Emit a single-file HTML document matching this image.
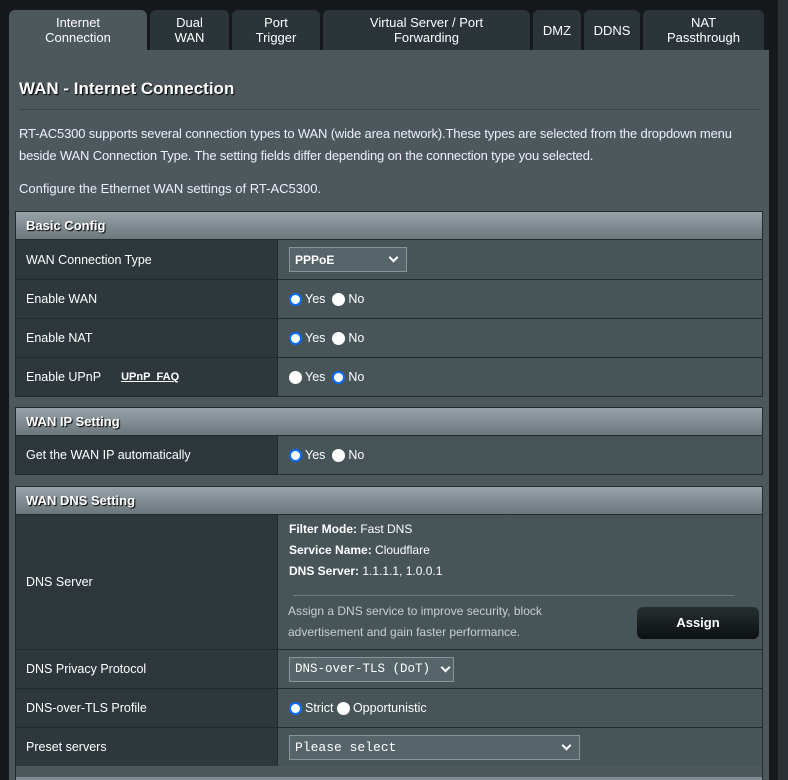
<!DOCTYPE html>
<html><head><style>
*{box-sizing:border-box;margin:0;padding:0}
html,body{width:788px;height:780px;overflow:hidden}
body{background:#15191b;font-family:"Liberation Sans",Arial,sans-serif;color:#fff;position:relative}
.strip{position:absolute;left:778px;top:0;width:10px;height:780px;background:#2b3134}
.tab{position:absolute;top:10px;height:40px;background:#2b3438;border-radius:6px 6px 0 0;text-align:center;font-size:13px;line-height:15px;color:#fff;display:flex;align-items:center;justify-content:center}
.tab.act{background:#4d585d}
.panel{position:absolute;left:9px;top:50px;width:760px;height:730px;background:#4d585d}
h1{position:absolute;left:19px;top:79px;font-size:17px;font-weight:bold;text-shadow:1px 1px 1px #000}
.hr{position:absolute;left:19px;top:109px;width:741px;height:1px;background:#6d797e;border-top:1px solid #3a4448}
.p{position:absolute;left:19px;width:750px;font-size:13px;color:#eef}
.tbl{position:absolute;left:15px;width:748px;border:1px solid #222b2e}
.hd{height:28px;background:linear-gradient(#97a3a8,#6b777c);font-weight:bold;font-size:13px;padding:6px 10px;text-shadow:1px 1px 1px #000;border-bottom:1px solid #222b2e}
.row{display:flex;border-top:1px solid #222b2e;font-size:12.5px}
.hd+.row{border-top:none}
.l{width:262px;background:#2e383c;padding-left:10px;display:flex;align-items:center;border-right:1px solid #222b2e}
.r{flex:1;background:#475458;padding-left:11px;display:flex;align-items:center;white-space:nowrap}
.rad{display:inline-block;width:13px;height:13px;border-radius:50%;background:#fff;vertical-align:-1px;margin-right:3px}
.rad.on{border:2px solid #0a6cff;background:#fff;box-shadow:inset 0 0 0 1px #fff}
.sel{border:1px solid #8a9599;background:#566569;height:25px;font-family:"Liberation Mono",monospace;font-size:13px;padding:0 5px;display:flex;align-items:center;justify-content:space-between;white-space:nowrap}
.chev{width:7px;height:7px;border-right:2px solid #fff;border-bottom:2px solid #fff;transform:rotate(45deg);margin:-4px 4px 0 6px;flex:none}
a{color:#fff;text-decoration:underline}
</style></head><body>
<div class="strip"></div>
<div class="panel"></div>
<div class="tab act" style="left:9px;width:138px">Internet<br>Connection</div>
<div class="tab" style="left:150px;width:79px">Dual<br>WAN</div>
<div class="tab" style="left:232px;width:88px">Port<br>Trigger</div>
<div class="tab" style="left:323px;width:207px">Virtual Server / Port<br>Forwarding</div>
<div class="tab" style="left:533px;width:48px">DMZ</div>
<div class="tab" style="left:584px;width:56px">DDNS</div>
<div class="tab" style="left:643px;width:121px">NAT<br>Passthrough</div>
<h1>WAN - Internet Connection</h1>
<div class="hr"></div>
<div class="p" style="top:123px;line-height:22px;letter-spacing:-0.15px">RT-AC5300 supports several connection types to WAN (wide area network).These types are selected from the dropdown menu<br>beside WAN Connection Type. The setting fields differ depending on the connection type you selected.</div>
<div class="p" style="top:181px">Configure the Ethernet WAN settings of RT-AC5300.</div>

<div class="tbl" style="top:211px">
<div class="hd">Basic Config</div>
<div class="row" style="height:39px"><div class="l">WAN Connection Type</div><div class="r"><div class="sel" style="width:118px;font-family:'Liberation Sans',sans-serif;font-weight:bold;font-size:12px">PPPoE<span class="chev"></span></div></div></div>
<div class="row" style="height:39px"><div class="l">Enable WAN</div><div class="r"><span class="rad on"></span>Yes&nbsp;&nbsp;<span class="rad"></span>No</div></div>
<div class="row" style="height:39px"><div class="l">Enable NAT</div><div class="r"><span class="rad on"></span>Yes&nbsp;&nbsp;<span class="rad"></span>No</div></div>
<div class="row" style="height:39px"><div class="l">Enable UPnP<a style="margin-left:20px;font-size:11px;font-weight:bold;font-family:'Liberation Sans',sans-serif">UPnP&nbsp;&nbsp;FAQ</a></div><div class="r"><span class="rad"></span>Yes&nbsp;&nbsp;<span class="rad on"></span>No</div></div>
</div>

<div class="tbl" style="top:407px">
<div class="hd">WAN IP Setting</div>
<div class="row" style="height:38px"><div class="l">Get the WAN IP automatically</div><div class="r"><span class="rad on"></span>Yes&nbsp;&nbsp;<span class="rad"></span>No</div></div>
</div>

<div class="tbl" style="top:486px;height:300px">
<div class="hd">WAN DNS Setting</div>
<div class="row" style="height:134px"><div class="l">DNS Server</div><div class="r" style="display:block;position:relative;padding-top:4px;font-size:12px;line-height:21px"><b>Filter Mode:</b> Fast DNS<br><b>Service Name:</b> Cloudflare<br><b>DNS Server:</b> 1.1.1.1, 1.0.0.1
<div style="position:absolute;left:15px;top:80px;width:441px;height:1px;background:#6f7b80"></div>
<div style="position:absolute;left:10px;top:86px;color:#c8cfd2;line-height:21px">Assign a DNS service to improve security, block<br>advertisement and gain faster performance.</div>
<div style="position:absolute;left:359px;top:92px;width:122px;height:32px;border-radius:6px;background:linear-gradient(#26302f,#0c1012);font-weight:bold;font-size:13px;text-align:center;line-height:32px">Assign</div></div></div>
<div class="row" style="height:39px"><div class="l">DNS Privacy Protocol</div><div class="r"><div class="sel" style="width:165px;font-size:12.5px;padding-right:2px">DNS-over-TLS (DoT)<span class="chev" style="margin:-4px 2px 0 2px"></span></div></div></div>
<div class="row" style="height:39px"><div class="l">DNS-over-TLS Profile</div><div class="r"><span class="rad on"></span>Strict&nbsp;<span class="rad"></span>Opportunistic</div></div>
<div class="row" style="height:39px"><div class="l">Preset servers</div><div class="r"><div class="sel" style="width:291px">Please select<span class="chev"></span></div></div></div>
<div style="height:11px;background:#4d585d"></div>
<div style="height:20px;background:#7f8b90"></div>
</div>
</body></html>
